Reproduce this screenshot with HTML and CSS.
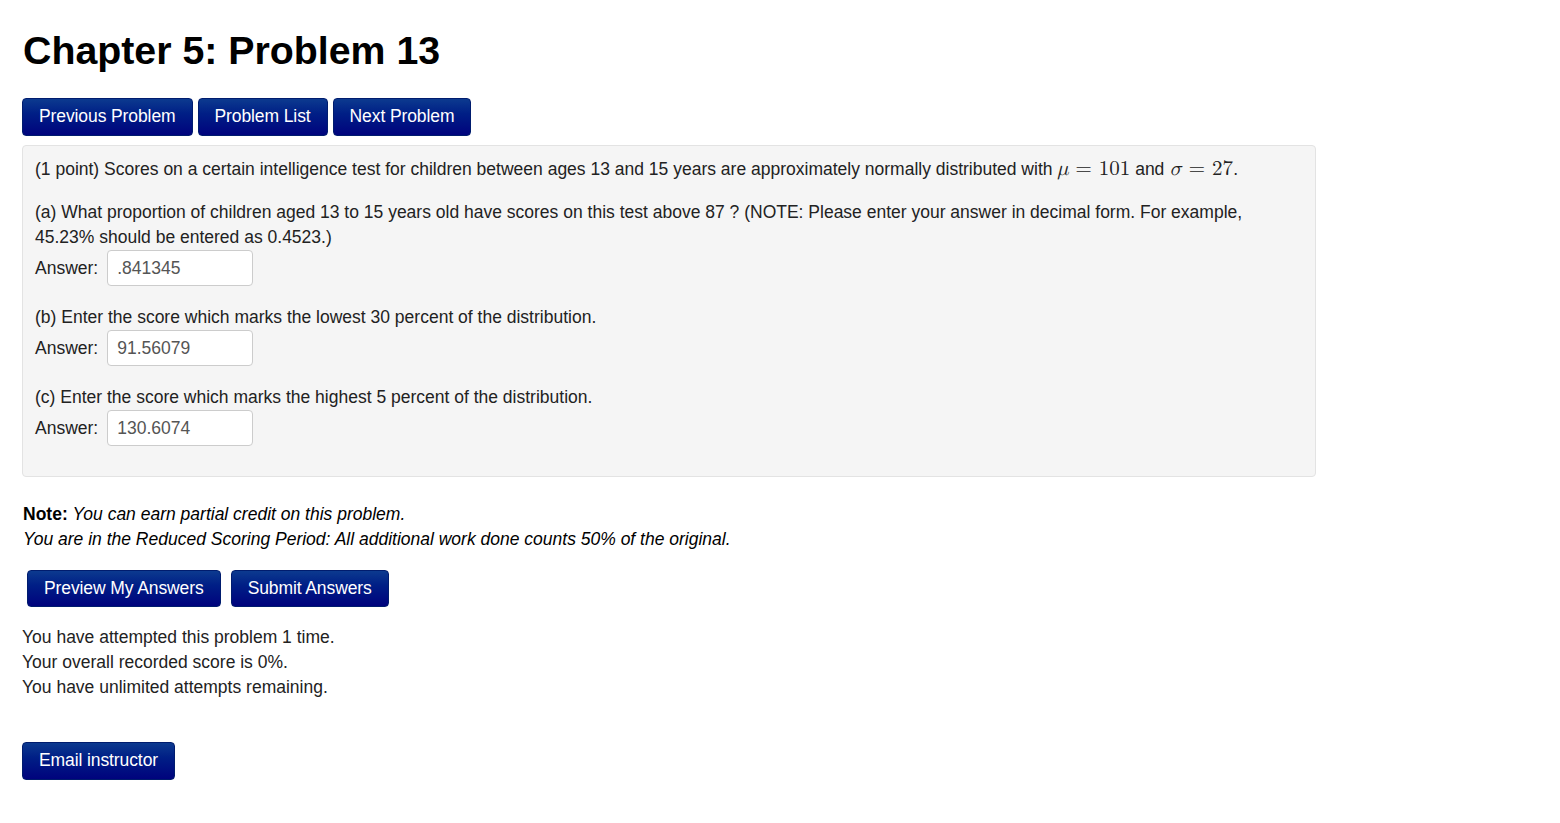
FILE: index.html
```html
<!DOCTYPE html>
<html>
<head>
<meta charset="utf-8">
<title>Chapter 5: Problem 13</title>
<link rel="stylesheet" href="styles.css">
</head>
<body>
<div class="page">
  <h1 class="title">Chapter 5: Problem 13</h1>
  <div class="nav">
    <a class="btn">Previous Problem</a>
    <a class="btn">Problem List</a>
    <a class="btn">Next Problem</a>
  </div>
  <div class="well">
    <p class="part qtext">(1 point) Scores on a certain intelligence test for children between ages 13 and 15 years are approximately normally distributed with <span class="math"><i>μ</i> = 101</span> and <span class="math"><i>σ</i> = 27</span>.</p>
    <div class="part">
      <div class="qtext">(a) What proportion of children aged 13 to 15 years old have scores on this test above 87 ? (NOTE: Please enter your answer in decimal form. For example, 45.23% should be entered as 0.4523.)</div>
      <div class="answer"><span class="label">Answer:</span><span class="input">.841345</span></div>
    </div>
    <div class="part">
      <div class="qtext">(b) Enter the score which marks the lowest 30 percent of the distribution.</div>
      <div class="answer"><span class="label">Answer:</span><span class="input">91.56079</span></div>
    </div>
    <div class="part">
      <div class="qtext">(c) Enter the score which marks the highest 5 percent of the distribution.</div>
      <div class="answer"><span class="label">Answer:</span><span class="input">130.6074</span></div>
    </div>
  </div>
  <div class="note">
    <div><b>Note:</b> <i>You can earn partial credit on this problem.</i></div>
    <div><i>You are in the Reduced Scoring Period: All additional work done counts 50% of the original.</i></div>
  </div>
  <div class="submit">
    <a class="btn btn-small">Preview My Answers</a>
    <a class="btn btn-small">Submit Answers</a>
  </div>
  <div class="status">
    <div>You have attempted this problem 1 time.</div>
    <div>Your overall recorded score is 0%.</div>
    <div>You have unlimited attempts remaining.</div>
  </div>
  <div class="email">
    <a class="btn">Email instructor</a>
  </div>
</div>
</body>
</html>
```
FILE: styles.css
```css
html, body {
  margin: 0;
  padding: 0;
  background: #fff;
}
body {
  font-family: "Liberation Sans", Arial, sans-serif;
  font-size: 17.5px;
  line-height: 25px;
  color: #222;
}
.page {
  padding: 0 0 0 22px;
  width: 1294px;
}
.title {
  margin: 0;
  padding-top: 26px;
  height: 49px;
  line-height: 49px;
  font-size: 39.3px;
  font-weight: bold;
  color: #000;
  padding-left: 1px;
}
.nav {
  display: flex;
  gap: 5px;
  margin-top: 23px;
}
.btn {
  display: inline-flex;
  align-items: center;
  justify-content: center;
  box-sizing: border-box;
  height: 38px;
  padding: 0 16px 2px 16px;
  color: #fff;
  font-size: 17.5px;
  background: linear-gradient(to bottom, #0c3a8f 0%, #001f86 40%, #00037d 100%);
  border: 1px solid #001c6e;
  border-radius: 4px;
  text-decoration: none;
  letter-spacing: -0.1px;
}
.well {
  margin-top: 9px;
  background: #f5f5f5;
  border: 1px solid #e3e3e3;
  border-radius: 4px;
  padding: 10px 12px 12px 12px;
}
.part {
  margin: 0 0 17.5px 0;
}
.qtext {
  padding-top: 1px;
  margin-bottom: -1px;
}
p.qtext {
  margin-bottom: 17.5px;
  height: 24px;
}
.math {
  font-family: "Latin Modern Math", "Liberation Serif", "Times New Roman", serif;
  font-size: 21px;
  line-height: 16px;
}
.math i {
  font-style: italic;
}
.answer {
  display: flex;
  align-items: center;
  padding-top: 1.5px;
}
.label {
  margin-right: 9px;
}
.input {
  display: inline-block;
  box-sizing: border-box;
  width: 146px;
  height: 36px;
  line-height: 34px;
  padding: 0 9px;
  background: #fff;
  border: 1px solid #ccc;
  border-radius: 4px;
  color: #555;
}
.note {
  margin-top: 25px;
  padding-left: 1px;
  color: #000;
}
.note b {
  font-weight: bold;
}
.submit {
  display: flex;
  gap: 10px;
  margin-top: 18.5px;
  padding-left: 5px;
}
.btn-small {
  height: 37px;
  padding-bottom: 0;
}
.status {
  margin-top: 17.5px;
}
.email {
  margin-top: 42.5px;
  display: flex;
}
```
